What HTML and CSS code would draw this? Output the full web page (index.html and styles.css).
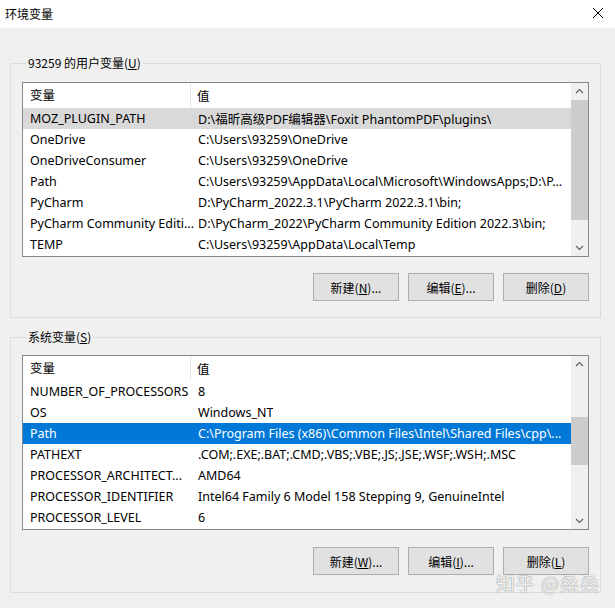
FILE: index.html
```html
<!DOCTYPE html>
<html lang="zh-CN">
<head>
<meta charset="utf-8">
<title>环境变量</title>
<link rel="stylesheet" href="styles.css">
</head>
<body>
<div class="window">
  <div class="titlebar">
    <span class="title">环境变量</span>
    <svg class="close" width="12" height="12" viewBox="0 0 12 12"><path d="M1 1 L11 11 M11 1 L1 11" stroke="#000" stroke-width="1" fill="none"/></svg>
  </div>
  <div class="body">
    <fieldset class="group group-user">
      <legend>93259 的用户变量(<u>U</u>)</legend>
      <div class="list">
        <div class="rows">
          <div class="row header"><span class="c1">变量</span><span class="c2">值</span></div>
          <div class="row sel-gray"><span class="c1">MOZ_PLUGIN_PATH</span><span class="c2">D:\福昕高级PDF编辑器\Foxit PhantomPDF\plugins\</span></div>
          <div class="row"><span class="c1">OneDrive</span><span class="c2">C:\Users\93259\OneDrive</span></div>
          <div class="row"><span class="c1">OneDriveConsumer</span><span class="c2">C:\Users\93259\OneDrive</span></div>
          <div class="row"><span class="c1">Path</span><span class="c2">C:\Users\93259\AppData\Local\Microsoft\WindowsApps;D:\P...</span></div>
          <div class="row"><span class="c1">PyCharm</span><span class="c2">D:\PyCharm_2022.3.1\PyCharm 2022.3.1\bin;</span></div>
          <div class="row"><span class="c1">PyCharm Community Editi...</span><span class="c2">D:\PyCharm_2022\PyCharm Community Edition 2022.3\bin;</span></div>
          <div class="row"><span class="c1">TEMP</span><span class="c2">C:\Users\93259\AppData\Local\Temp</span></div>
        </div>
        <div class="scrollbar">
          <svg class="arrow" width="17" height="17" viewBox="0 0 17 17"><path d="M5 10 L8.5 6.5 L12 10" stroke="#606060" stroke-width="1.2" fill="none"/></svg>
          <div class="track"><div class="thumb thumb-user"></div></div>
          <svg class="arrow" width="17" height="17" viewBox="0 0 17 17"><path d="M5 7 L8.5 10.5 L12 7" stroke="#606060" stroke-width="1.2" fill="none"/></svg>
        </div>
      </div>
      <div class="buttons">
        <button class="btn">新建(<u>N</u>)...</button>
        <button class="btn">编辑(<u>E</u>)...</button>
        <button class="btn">删除(<u>D</u>)</button>
      </div>
    </fieldset>

    <fieldset class="group group-sys">
      <legend>系统变量(<u>S</u>)</legend>
      <div class="list">
        <div class="rows">
          <div class="row header"><span class="c1">变量</span><span class="c2">值</span></div>
          <div class="row"><span class="c1">NUMBER_OF_PROCESSORS</span><span class="c2">8</span></div>
          <div class="row"><span class="c1">OS</span><span class="c2">Windows_NT</span></div>
          <div class="row sel-blue"><span class="c1">Path</span><span class="c2">C:\Program Files (x86)\Common Files\Intel\Shared Files\cpp\...</span></div>
          <div class="row"><span class="c1">PATHEXT</span><span class="c2">.COM;.EXE;.BAT;.CMD;.VBS;.VBE;.JS;.JSE;.WSF;.WSH;.MSC</span></div>
          <div class="row"><span class="c1">PROCESSOR_ARCHITECT...</span><span class="c2">AMD64</span></div>
          <div class="row"><span class="c1">PROCESSOR_IDENTIFIER</span><span class="c2">Intel64 Family 6 Model 158 Stepping 9, GenuineIntel</span></div>
          <div class="row"><span class="c1">PROCESSOR_LEVEL</span><span class="c2">6</span></div>
        </div>
        <div class="scrollbar">
          <svg class="arrow" width="17" height="17" viewBox="0 0 17 17"><path d="M5 10 L8.5 6.5 L12 10" stroke="#606060" stroke-width="1.2" fill="none"/></svg>
          <div class="track"><div class="thumb thumb-sys"></div></div>
          <svg class="arrow" width="17" height="17" viewBox="0 0 17 17"><path d="M5 7 L8.5 10.5 L12 7" stroke="#606060" stroke-width="1.2" fill="none"/></svg>
        </div>
      </div>
      <div class="buttons">
        <button class="btn">新建(<u>W</u>)...</button>
        <button class="btn">编辑(<u>I</u>)...</button>
        <button class="btn">删除(<u>L</u>)</button>
      </div>
    </fieldset>
  </div>
  <div class="watermark">知乎 @桑桑</div>
</div>
</body>
</html>
```

FILE: styles.css
```css
* { box-sizing: border-box; }
html, body {
  margin: 0;
  padding: 0;
  background: #f0f0f0;
}
body {
  font-family: "Noto Sans", "Noto Sans CJK SC", sans-serif;
  font-size: 12.5px;
  color: #000;
}
.window {
  position: relative;
  width: 615px;
  height: 608px;
  background: #f0f0f0;
  overflow: hidden;
}
.titlebar {
  height: 28px;
  background: #fff;
  display: flex;
  align-items: center;
  justify-content: space-between;
  padding: 0 11px 2px 5px;
}
.title {
  font-family: "Noto Sans CJK SC", sans-serif;
  font-size: 12px;
}
.body {
  padding: 28px 14px 0 10px;
  display: flex;
  flex-direction: column;
  gap: 12px;
}
.group {
  margin: 0;
  border: 1px solid #dcdcdc;
  padding: 12px 11px 16px 11px;
  min-width: 0;
}
.group legend {
  padding: 0 2px;
  margin-left: 4px;
  line-height: 14px;
  font-size: 12px;
  font-family: "Noto Sans CJK SC", sans-serif;
}
.group-sys {
  padding-top: 11px;
  padding-bottom: 17px;
}
.group-sys .buttons {
  margin-top: 17px;
}
.list {
  display: flex;
  height: 175px;
  border: 1px solid #828790;
  background: #fff;
}
.rows {
  flex: 1;
  min-width: 0;
}
.row {
  display: flex;
  height: 21px;
  align-items: center;
  white-space: nowrap;
  overflow: hidden;
}
.row.header {
  height: 25px;
}
.c1 {
  width: 168px;
  flex: none;
  padding-left: 7px;
  overflow: visible;
}
.c2 {
  padding-left: 7px;
  overflow: hidden;
}
.header .c1 {
  border-right: 1px solid #e5e5e5;
  height: 25px;
  line-height: 25px;
}
.header .c2 {
  padding-left: 6px;
}
.sel-gray {
  background: #d9d9d9;
}
.sel-blue {
  background: #0078d7;
  color: #fff;
}
.scrollbar {
  width: 17px;
  flex: none;
  background: #f0f0f0;
  display: flex;
  flex-direction: column;
}
.arrow {
  display: block;
  flex: none;
}
.track {
  flex: 1;
  position: relative;
}
.thumb {
  position: absolute;
  left: 0;
  right: 0;
  background: #cdcdcd;
}
.thumb-user { top: 0; height: 120px; }
.thumb-sys { top: 44px; height: 48px; }
.buttons {
  display: flex;
  justify-content: flex-end;
  gap: 9px;
  margin-top: 16px;
}
.btn {
  width: 86px;
  height: 28px;
  background: #e1e1e1;
  border: 1px solid #adadad;
  font-family: "Noto Sans CJK SC", sans-serif;
  font-size: 12px;
  color: #000;
  padding: 0;
}
.watermark {
  position: absolute;
  right: 15px;
  bottom: 14px;
  font-family: "Noto Sans CJK SC", sans-serif;
  font-size: 19px;
  line-height: 22px;
  color: rgba(255, 255, 255, 0.85);
  text-shadow: 0 0 1px #999, 0 0 1px #999;
  letter-spacing: 1px;
}
```
